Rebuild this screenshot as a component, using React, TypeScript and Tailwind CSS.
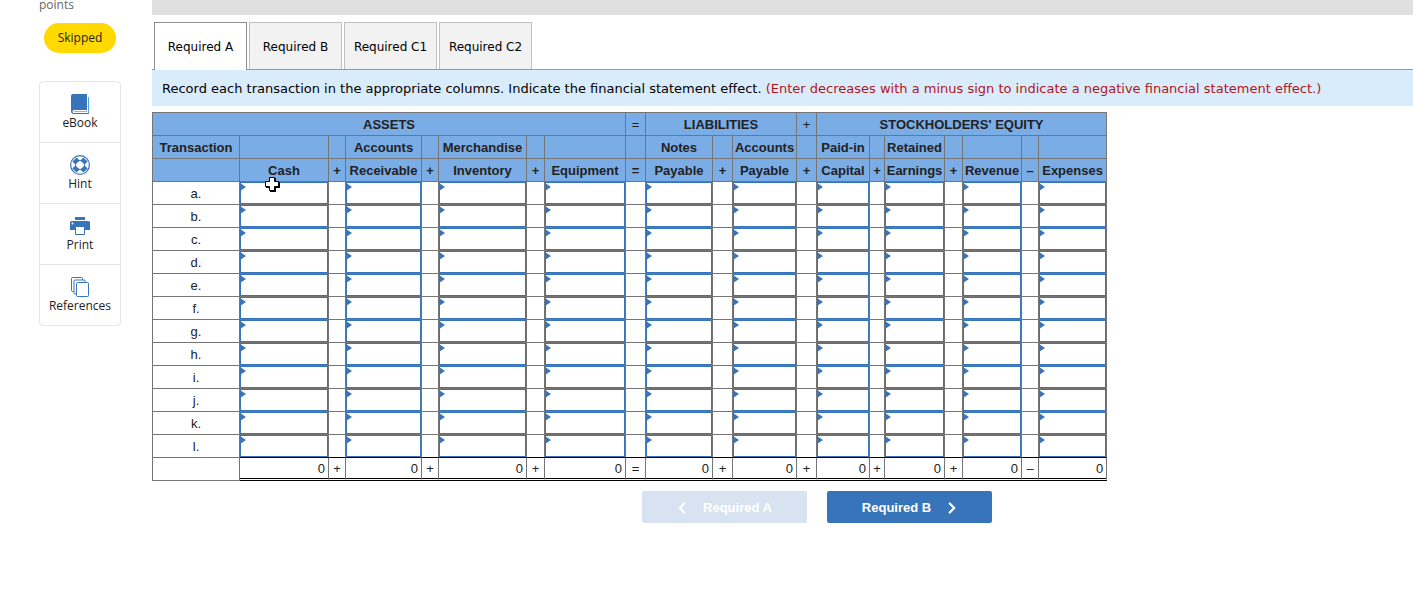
import { FiChevronLeft, FiChevronRight } from "react-icons/fi";

const TABS = ["Required A", "Required B", "Required C1", "Required C2"];

const ROWS = ["a", "b", "c", "d", "e", "f", "g", "h", "i", "j", "k", "l"];

type Column = { top?: string; bottom: string; op?: boolean; width: string };

const COLUMNS: Column[] = [
	{ bottom: "Cash", width: "w-[89px]" },
	{ bottom: "+", op: true, width: "w-[17px]" },
	{ top: "Accounts", bottom: "Receivable", width: "w-[76px]" },
	{ bottom: "+", op: true, width: "w-[17px]" },
	{ top: "Merchandise", bottom: "Inventory", width: "w-[88px]" },
	{ bottom: "+", op: true, width: "w-[18px]" },
	{ bottom: "Equipment", width: "w-[81px]" },
	{ bottom: "=", op: true, width: "w-[20px]" },
	{ top: "Notes", bottom: "Payable", width: "w-[67px]" },
	{ bottom: "+", op: true, width: "w-[20px]" },
	{ top: "Accounts", bottom: "Payable", width: "w-[64px]" },
	{ bottom: "+", op: true, width: "w-[20px]" },
	{ top: "Paid-in", bottom: "Capital", width: "w-[53px]" },
	{ bottom: "+", op: true, width: "w-[15px]" },
	{ top: "Retained", bottom: "Earnings", width: "w-[60px]" },
	{ bottom: "+", op: true, width: "w-[18px]" },
	{ bottom: "Revenue", width: "w-[59px]" },
	{ bottom: "–", op: true, width: "w-[17px]" },
	{ bottom: "Expenses", width: "w-[68px]" },
];

const BookIcon = () => (
	<svg width="20" height="20" viewBox="0 0 20 20" aria-hidden="true">
		<path d="M3 0h14v16H4a1 1 0 0 0 0 3h15v1H4a3 3 0 0 1-3-3V2a2 2 0 0 1 2-2z" fill="#3874ba" />
		<path d="M4 17.500h13" stroke="#8fb3dc" />
		<path d="M18.500 3v17" stroke="#4fa3dc" />
	</svg>
);

const HintIcon = () => (
	<svg width="20" height="20" viewBox="0 0 20 20" fill="none" aria-hidden="true">
		<circle cx="10" cy="10" r="9.400" stroke="#3874ba" strokeWidth="1.200" />
		<circle cx="10" cy="10" r="4.500" stroke="#3874ba" />
		<path d="M4.500 4.500l3 3M15.500 4.500l-3 3M4.500 15.500l3-3M15.500 15.500l-3-3" stroke="#3874ba" strokeWidth="6" />
	</svg>
);

const PrintIcon = () => (
	<svg width="20" height="18" viewBox="0 0 20 18" aria-hidden="true">
		<path d="M5 0h10v3H5z" fill="#3874ba" />
		<path d="M1.500 4h17A1.500 1.500 0 0 1 20 5.500V13H0V5.500A1.500 1.500 0 0 1 1.500 4z" fill="#3874ba" />
		<path d="M5.500 9.500h9v8h-9z" fill="#fff" stroke="#3874ba" />
		<circle cx="2.500" cy="6.500" r="1" fill="#fff" />
	</svg>
);

const ReferencesIcon = () => (
	<svg width="18" height="20" viewBox="0 0 18 20" fill="#fff" stroke="#3874ba" aria-hidden="true">
		<rect x="0.500" y="0.500" width="11" height="14" rx="1" />
		<rect x="3" y="3" width="11" height="14" rx="1" />
		<rect x="5.500" y="5.500" width="12" height="14" rx="1" />
	</svg>
);

const TOOLS = [
	{ label: "eBook", Icon: BookIcon },
	{ label: "Hint", Icon: HintIcon },
	{ label: "Print", Icon: PrintIcon },
	{ label: "References", Icon: ReferencesIcon },
];

const Sidebar = () => (
	<aside className="w-[152px] shrink-0 pl-[39px] font-['Open_Sans',sans-serif] text-[12px] text-[#222]">
		<p className="-mt-[3px] h-[26px] leading-4 text-[#666]">points</p>
		<div className="w-[82px]">
			<div className="mx-auto flex h-[30px] w-[72px] items-center justify-center rounded-full bg-[#ffd900]">
				Skipped
			</div>
			<nav className="mt-7 rounded border border-[#e6e6e6]">
				{TOOLS.map(({ label, Icon }) => (
					<button
						type="button"
						key={label}
						className="flex h-[61px] w-full flex-col items-center border-b border-[#e6e6e6] pt-[11px] leading-4 last:h-[60px] last:border-b-0"
					>
						<span className="flex h-[22px] items-center">
							<Icon />
						</span>
						{label}
					</button>
				))}
			</nav>
		</div>
	</aside>
);

const Tabs = () => (
	<div
		role="tablist"
		className="mt-[7px] flex gap-[2px] border-b border-[#999] pl-[2px] font-['DejaVu_Sans',sans-serif] text-[12px]"
	>
		{TABS.map((tab, index) => (
			<button
				type="button"
				role="tab"
				aria-selected={index === 0}
				key={tab}
				className={`w-[93px] whitespace-nowrap border border-b-0 text-black ${
					index === 0 ? "-mb-px h-12 border-[#8f8f8f] bg-white" : "h-[47px] border-[#c0c0c0] bg-[#f2f2f2] pt-px"
				}`}
			>
				{tab}
			</button>
		))}
	</div>
);

const HEAD = "h-[23px] border-r border-b border-[#757575] bg-[#7aace6] p-0 pt-[2px] whitespace-nowrap";

const Worksheet = () => (
	<table className="mt-[6px] w-[955px] table-fixed border-separate border-spacing-0 border-t border-l border-[#757575] text-center font-['Liberation_Sans',sans-serif] text-[13px] leading-4 text-[#222]">
		<colgroup>
			<col className="w-[87px]" />
			{COLUMNS.map((column, index) => (
				<col key={index} className={column.width} />
			))}
		</colgroup>
		<thead>
			<tr>
				<th colSpan={8} className={HEAD}>ASSETS</th>
				<th className={`${HEAD} font-normal`}>=</th>
				<th colSpan={3} className={HEAD}>LIABILITIES</th>
				<th className={`${HEAD} font-normal`}>+</th>
				<th colSpan={7} className={HEAD}>STOCKHOLDERS' EQUITY</th>
			</tr>
			<tr>
				<th className={HEAD}>Transaction</th>
				{COLUMNS.map((column, index) => (
					<th key={index} className={HEAD}>{column.top}</th>
				))}
			</tr>
			<tr>
				<th className={HEAD} />
				{COLUMNS.map((column, index) => (
					<th key={index} className={HEAD}>{column.bottom}</th>
				))}
			</tr>
		</thead>
		<tbody>
			{ROWS.map((row, rowIndex) => {
				const line = rowIndex === ROWS.length - 1 ? "border-b-black" : "border-b-[#757575]";
				return (
					<tr key={row}>
						<th scope="row" className="h-[23px] border-r border-b border-[#757575] p-0 pt-[2px] font-normal">
							{row}.
						</th>
						{COLUMNS.map((column, index) => (
							<td key={index} className={`h-[23px] border-r border-b border-r-[#757575] p-0 ${line}`}>
								{!column.op && (
									<div className="relative">
										<input
											type="text"
											aria-label={`${row}. ${column.top ?? ""} ${column.bottom}`}
											className="block h-[22px] w-full border border-[#3874ba] bg-white px-1 text-right outline-none"
										/>
										<svg
											width="6"
											height="8"
											viewBox="0 0 6 8"
											className="pointer-events-none absolute top-px left-0"
											aria-hidden="true"
										>
											<path d="M0 0L6 4L0 8z" fill="#3874ba" />
										</svg>
									</div>
								)}
							</td>
						))}
					</tr>
				);
			})}
		</tbody>
		<tfoot>
			<tr>
				<td className="h-[23px] border-r border-b border-[#757575] p-0" />
				{COLUMNS.map((column, index) => (
					<td
						key={index}
						className={`h-[23px] border-r border-b-3 border-double border-r-[#757575] border-b-black p-0 pt-[2px] ${
							column.op ? "" : "pr-[3px] text-right"
						}`}
					>
						{column.op ? column.bottom : "0"}
					</td>
				))}
			</tr>
		</tfoot>
	</table>
);

const Pager = () => (
	<div className="mt-[10px] flex gap-5 pl-[490px] font-['Liberation_Sans',sans-serif] text-[13px] font-bold text-white">
		<button
			type="button"
			disabled
			className="flex h-8 w-[165px] items-center justify-center gap-3 rounded-xs bg-[#d7e3f1] pt-px pr-1"
		>
			<FiChevronLeft size={18} strokeWidth={3} />
			Required A
		</button>
		<button
			type="button"
			className="flex h-8 w-[165px] items-center justify-center gap-3 rounded-xs bg-[#3874ba] pt-px pl-1"
		>
			Required B
			<FiChevronRight size={18} strokeWidth={3} />
		</button>
	</div>
);

/* cross-shaped spreadsheet cursor resting on the Cash column */
const Cursor = () => (
	<svg
		width="18"
		height="18"
		viewBox="0 0 18 18"
		className="pointer-events-none absolute top-[176px] left-[264px]"
		aria-hidden="true"
	>
		<path d="M6 2h6v4h4v6h-4v4H6v-4H2V6h4z" fill="#000" />
		<path d="M5.500 1.500h5v4h4v5h-4v4h-5v-4h-4v-5h4z" fill="#fff" stroke="#000" />
	</svg>
);

export default function App() {
	return (
		<div className="relative flex min-h-screen overflow-hidden bg-white">
			<Sidebar />
			<main className="min-w-0 flex-1">
				<div className="h-[15px] bg-[#e0e0e0]" />
				<Tabs />
				<p className="flex h-9 items-center bg-[#d9ecfb] pt-[2px] pl-[10px] font-['DejaVu_Sans',sans-serif] text-[13px] whitespace-pre text-black">
					Record each transaction in the appropriate columns. Indicate the financial statement effect.{" "}
					<span className="text-[#b0151b]">
						(Enter decreases with a minus sign to indicate a negative financial statement effect.)
					</span>
				</p>
				<Worksheet />
				<Pager />
			</main>
			<Cursor />
		</div>
	);
}
